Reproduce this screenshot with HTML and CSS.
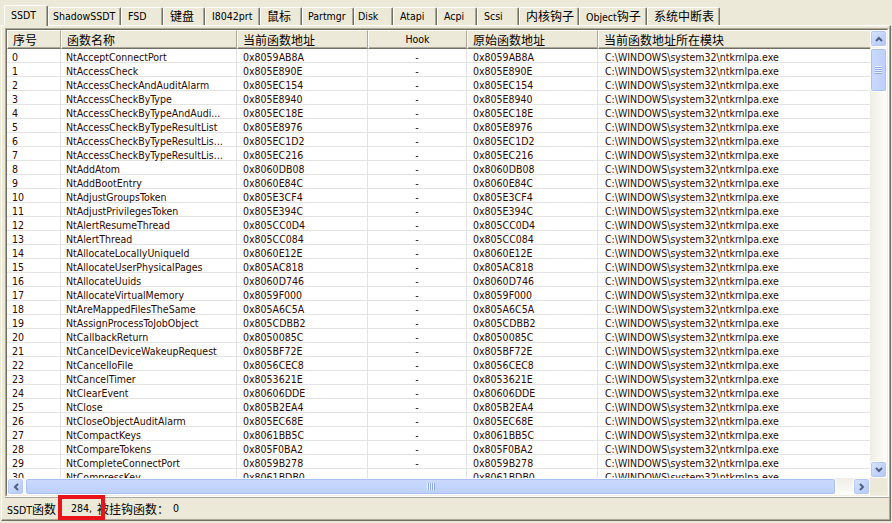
FILE: index.html
```html
<!DOCTYPE html>
<html lang="zh-CN">
<head>
<meta charset="utf-8">
<title>SSDT</title>
<link rel="stylesheet" href="styles.css">
</head>
<body>
<div class="window">
  <div class="tabs">
    <div class="tab active">SSDT</div>
    <div class="tab">ShadowSSDT</div>
    <div class="tab">FSD</div>
    <div class="tab"><span class="zh">键盘</span></div>
    <div class="tab">I8042prt</div>
    <div class="tab"><span class="zh">鼠标</span></div>
    <div class="tab">Partmgr</div>
    <div class="tab">Disk</div>
    <div class="tab">Atapi</div>
    <div class="tab">Acpi</div>
    <div class="tab">Scsi</div>
    <div class="tab"><span class="zh">内核钩子</span></div>
    <div class="tab">Object<span class="zh">钩子</span></div>
    <div class="tab"><span class="zh">系统中断表</span></div>
  </div>
  <div class="panel">
    <div class="list">
      <div class="list-inner">
        <div class="view">
          <div class="hdr">
            <span class="zh">序号</span>
            <span class="zh">函数名称</span>
            <span class="zh">当前函数地址</span>
            <span class="c">Hook</span>
            <span class="zh">原始函数地址</span>
            <span class="zh">当前函数地址所在模块</span>
          </div>
          <div class="rows">
            <div class="row"><span>0</span><span>NtAcceptConnectPort</span><span>0x8059AB8A</span><span class="c">-</span><span>0x8059AB8A</span><span>C:\WINDOWS\system32\ntkrnlpa.exe</span></div>
            <div class="row"><span>1</span><span>NtAccessCheck</span><span>0x805E890E</span><span class="c">-</span><span>0x805E890E</span><span>C:\WINDOWS\system32\ntkrnlpa.exe</span></div>
            <div class="row"><span>2</span><span>NtAccessCheckAndAuditAlarm</span><span>0x805EC154</span><span class="c">-</span><span>0x805EC154</span><span>C:\WINDOWS\system32\ntkrnlpa.exe</span></div>
            <div class="row"><span>3</span><span>NtAccessCheckByType</span><span>0x805E8940</span><span class="c">-</span><span>0x805E8940</span><span>C:\WINDOWS\system32\ntkrnlpa.exe</span></div>
            <div class="row"><span>4</span><span>NtAccessCheckByTypeAndAudi...</span><span>0x805EC18E</span><span class="c">-</span><span>0x805EC18E</span><span>C:\WINDOWS\system32\ntkrnlpa.exe</span></div>
            <div class="row"><span>5</span><span>NtAccessCheckByTypeResultList</span><span>0x805E8976</span><span class="c">-</span><span>0x805E8976</span><span>C:\WINDOWS\system32\ntkrnlpa.exe</span></div>
            <div class="row"><span>6</span><span>NtAccessCheckByTypeResultLis...</span><span>0x805EC1D2</span><span class="c">-</span><span>0x805EC1D2</span><span>C:\WINDOWS\system32\ntkrnlpa.exe</span></div>
            <div class="row"><span>7</span><span>NtAccessCheckByTypeResultLis...</span><span>0x805EC216</span><span class="c">-</span><span>0x805EC216</span><span>C:\WINDOWS\system32\ntkrnlpa.exe</span></div>
            <div class="row"><span>8</span><span>NtAddAtom</span><span>0x8060DB08</span><span class="c">-</span><span>0x8060DB08</span><span>C:\WINDOWS\system32\ntkrnlpa.exe</span></div>
            <div class="row"><span>9</span><span>NtAddBootEntry</span><span>0x8060E84C</span><span class="c">-</span><span>0x8060E84C</span><span>C:\WINDOWS\system32\ntkrnlpa.exe</span></div>
            <div class="row"><span>10</span><span>NtAdjustGroupsToken</span><span>0x805E3CF4</span><span class="c">-</span><span>0x805E3CF4</span><span>C:\WINDOWS\system32\ntkrnlpa.exe</span></div>
            <div class="row"><span>11</span><span>NtAdjustPrivilegesToken</span><span>0x805E394C</span><span class="c">-</span><span>0x805E394C</span><span>C:\WINDOWS\system32\ntkrnlpa.exe</span></div>
            <div class="row"><span>12</span><span>NtAlertResumeThread</span><span>0x805CC0D4</span><span class="c">-</span><span>0x805CC0D4</span><span>C:\WINDOWS\system32\ntkrnlpa.exe</span></div>
            <div class="row"><span>13</span><span>NtAlertThread</span><span>0x805CC084</span><span class="c">-</span><span>0x805CC084</span><span>C:\WINDOWS\system32\ntkrnlpa.exe</span></div>
            <div class="row"><span>14</span><span>NtAllocateLocallyUniqueId</span><span>0x8060E12E</span><span class="c">-</span><span>0x8060E12E</span><span>C:\WINDOWS\system32\ntkrnlpa.exe</span></div>
            <div class="row"><span>15</span><span>NtAllocateUserPhysicalPages</span><span>0x805AC818</span><span class="c">-</span><span>0x805AC818</span><span>C:\WINDOWS\system32\ntkrnlpa.exe</span></div>
            <div class="row"><span>16</span><span>NtAllocateUuids</span><span>0x8060D746</span><span class="c">-</span><span>0x8060D746</span><span>C:\WINDOWS\system32\ntkrnlpa.exe</span></div>
            <div class="row"><span>17</span><span>NtAllocateVirtualMemory</span><span>0x8059F000</span><span class="c">-</span><span>0x8059F000</span><span>C:\WINDOWS\system32\ntkrnlpa.exe</span></div>
            <div class="row"><span>18</span><span>NtAreMappedFilesTheSame</span><span>0x805A6C5A</span><span class="c">-</span><span>0x805A6C5A</span><span>C:\WINDOWS\system32\ntkrnlpa.exe</span></div>
            <div class="row"><span>19</span><span>NtAssignProcessToJobObject</span><span>0x805CDBB2</span><span class="c">-</span><span>0x805CDBB2</span><span>C:\WINDOWS\system32\ntkrnlpa.exe</span></div>
            <div class="row"><span>20</span><span>NtCallbackReturn</span><span>0x8050085C</span><span class="c">-</span><span>0x8050085C</span><span>C:\WINDOWS\system32\ntkrnlpa.exe</span></div>
            <div class="row"><span>21</span><span>NtCancelDeviceWakeupRequest</span><span>0x805BF72E</span><span class="c">-</span><span>0x805BF72E</span><span>C:\WINDOWS\system32\ntkrnlpa.exe</span></div>
            <div class="row"><span>22</span><span>NtCancelIoFile</span><span>0x8056CEC8</span><span class="c">-</span><span>0x8056CEC8</span><span>C:\WINDOWS\system32\ntkrnlpa.exe</span></div>
            <div class="row"><span>23</span><span>NtCancelTimer</span><span>0x8053621E</span><span class="c">-</span><span>0x8053621E</span><span>C:\WINDOWS\system32\ntkrnlpa.exe</span></div>
            <div class="row"><span>24</span><span>NtClearEvent</span><span>0x80606DDE</span><span class="c">-</span><span>0x80606DDE</span><span>C:\WINDOWS\system32\ntkrnlpa.exe</span></div>
            <div class="row"><span>25</span><span>NtClose</span><span>0x805B2EA4</span><span class="c">-</span><span>0x805B2EA4</span><span>C:\WINDOWS\system32\ntkrnlpa.exe</span></div>
            <div class="row"><span>26</span><span>NtCloseObjectAuditAlarm</span><span>0x805EC68E</span><span class="c">-</span><span>0x805EC68E</span><span>C:\WINDOWS\system32\ntkrnlpa.exe</span></div>
            <div class="row"><span>27</span><span>NtCompactKeys</span><span>0x8061BB5C</span><span class="c">-</span><span>0x8061BB5C</span><span>C:\WINDOWS\system32\ntkrnlpa.exe</span></div>
            <div class="row"><span>28</span><span>NtCompareTokens</span><span>0x805F0BA2</span><span class="c">-</span><span>0x805F0BA2</span><span>C:\WINDOWS\system32\ntkrnlpa.exe</span></div>
            <div class="row"><span>29</span><span>NtCompleteConnectPort</span><span>0x8059B278</span><span class="c">-</span><span>0x8059B278</span><span>C:\WINDOWS\system32\ntkrnlpa.exe</span></div>
            <div class="row"><span>30</span><span>NtCompressKey</span><span>0x8061BDB0</span><span class="c">-</span><span>0x8061BDB0</span><span>C:\WINDOWS\system32\ntkrnlpa.exe</span></div>
          </div>
        </div>
        <div class="vscroll">
          <div class="sb"><svg width="8" height="6" viewBox="0 0 8 6"><polyline points="1,5 4,2 7,5" fill="none" stroke="#4D6185" stroke-width="2"/></svg></div>
          <div class="thumb-v"><div class="grip-v"></div></div>
          <div class="track"></div>
          <div class="sb"><svg width="8" height="6" viewBox="0 0 8 6"><polyline points="1,1 4,4 7,1" fill="none" stroke="#4D6185" stroke-width="2"/></svg></div>
        </div>
        <div class="hscroll">
          <div class="sb"><svg width="6" height="8" viewBox="0 0 6 8"><polyline points="5,1 2,4 5,7" fill="none" stroke="#4D6185" stroke-width="2"/></svg></div>
          <div class="thumb-h"><div class="grip-h"></div></div>
          <div class="track"></div>
          <div class="sb"><svg width="6" height="8" viewBox="0 0 6 8"><polyline points="1,1 4,4 1,7" fill="none" stroke="#4D6185" stroke-width="2"/></svg></div>
        </div>
        <div class="corner"></div>
      </div>
    </div>
    <div class="status">
      <span class="s1">SSDT<span class="zh">函数</span></span>
      <span class="s2">284,</span>
      <span class="s3"><span class="zh">被挂钩函数：</span></span>
      <span class="s4">0</span>
    </div>
  </div>
  <div class="mark"></div>
</div>
</body>
</html>
```
FILE: styles.css
```css
* { box-sizing: border-box; }
html, body { margin: 0; padding: 0; }
body {
  background: #ECE9D8;
  width: 892px;
  height: 523px;
  overflow: hidden;
  font-family: "DejaVu Sans Condensed", "DejaVu Sans", "Noto Sans CJK SC", sans-serif;
  font-stretch: condensed;
  font-size: 10.5px;
  color: #000;
}
.zh {
  font-family: "Noto Sans CJK SC", sans-serif;
  font-stretch: normal;
  font-size: 12px;
}
.window { position: relative; width: 892px; height: 523px; }

/* tabs */
.tabs {
  position: relative;
  z-index: 1;
  display: flex;
  align-items: flex-end;
  height: 25px;
  padding-left: 4px;
}
.tab {
  height: 18px;
  padding-left: 6px;
  line-height: 16px;
  white-space: nowrap;
  overflow: hidden;
  border-top: 1px solid #fff;
  border-left: 1px solid #fff;
  border-right: 1px solid #716F64;
  border-radius: 2px 2px 0 0;
  box-shadow: inset -1px 0 0 #ACA899;
  background: #ECE9D8;
}
.tab.active { height: 21px; margin-bottom: -1px; line-height: 18px; }
.tab:nth-child(1) { width: 44px; }
.tab:nth-child(2) { width: 73px; padding-left: 4px; }
.tab:nth-child(3) { width: 42px; }
.tab:nth-child(4) { width: 42px; }
.tab:nth-child(5) { width: 55px; }
.tab:nth-child(6) { width: 42px; }
.tab:nth-child(7) { width: 52px; padding-left: 5px; }
.tab:nth-child(8) { width: 39px; padding-left: 3px; }
.tab:nth-child(9) { width: 44px; }
.tab:nth-child(10) { width: 40px; }
.tab:nth-child(11) { width: 42px; }
.tab:nth-child(12) { width: 60px; }
.tab:nth-child(13) { width: 68px; }
.tab:nth-child(14) { width: 73px; }

/* panel */
.panel {
  margin-left: 1px;
  width: 890px;
  height: 496px;
  border-top: 1px solid #fff;
  border-left: 1px solid #fff;
  border-right: 1px solid #716F64;
  border-bottom: 1px solid #716F64;
  box-shadow: inset -1px -1px 0 #ACA899;
  padding: 2px 1px 0 3px;
}
.list {
  width: 884px;
  height: 469px;
  border: 1px solid;
  border-color: #ACA899 #fff #fff #ACA899;
}
.list-inner {
  height: 100%;
  border: 1px solid;
  border-color: #716F64 #F1EFE2 #F1EFE2 #716F64;
  display: grid;
  grid-template-columns: 863px 17px;
  grid-template-rows: 448px 17px;
  background: #fff;
}
.view {
  grid-column: 1;
  grid-row: 1;
  overflow: hidden;
  display: flex;
  flex-direction: column;
  background: #fff;
}
.hdr, .row {
  display: grid;
  grid-template-columns: 54px 176px 131px 99px 131px 272px;
}
.hdr > span {
  height: 19px;
  line-height: 17px;
  padding-left: 5px;
  white-space: nowrap;
  overflow: hidden;
  background: #ECE9D8;
  border-top: 1px solid #fff;
  border-left: 1px solid #fff;
  border-right: 1px solid #ACA899;
  border-bottom: 1px solid #716F64;
  box-shadow: inset 0 -1px 0 #ACA899;
}
.hdr > span:last-child { border-right: none; }
.hdr > .c { text-align: center; padding-left: 0; font-size: 10.5px; }
.rows { flex: 1; overflow: hidden; }
.row { height: 14px; color: #2a0800; }
.row > span {
  height: 14px;
  line-height: 13px;
  padding-top: 2px;
  padding-left: 5px;
  white-space: nowrap;
  overflow-x: clip;
  overflow-y: visible;
  border-right: 1px solid #E3E3E3;
  border-bottom: 1px solid #E3E3E3;
}
.row > span:nth-child(3), .row > span:nth-child(5) { padding-left: 6px; }
.row > span:last-child { border-right: none; padding-left: 7px; }
.row > .c { text-align: center; padding-left: 0; }

/* scrollbars */
.vscroll {
  grid-column: 2;
  grid-row: 1;
  position: relative;
  z-index: 1;
  display: flex;
  flex-direction: column;
  background: linear-gradient(to right, #EEEDE5, #FDFDFA);
}
.hscroll {
  grid-column: 1;
  grid-row: 2;
  position: relative;
  z-index: 1;
  display: flex;
  background: linear-gradient(to bottom, #EEEDE5, #FDFDFA);
}
.corner { grid-column: 2; grid-row: 2; background: #ECE9D8; }
.track { flex: 1; }
.sb {
  flex: none;
  width: 17px;
  height: 17px;
  display: flex;
  align-items: center;
  justify-content: center;
  border: 1px solid #fff;
  border-radius: 3px;
  background: linear-gradient(135deg, #D9E4FE 0%, #C4D5FC 50%, #B5C9F7 100%);
  box-shadow: inset 0 0 0 1px #B4C8F2;
}
.thumb-v {
  flex: none;
  height: 44px;
  margin-top: 1px;
  display: flex;
  align-items: center;
  justify-content: center;
  border: 1px solid #fff;
  border-radius: 3px;
  background: linear-gradient(to right, #CBDAFD, #BDD0FA);
  box-shadow: inset 0 0 0 1px #A9C0F3;
}
.grip-v {
  width: 7px;
  height: 8px;
  background: repeating-linear-gradient(to bottom, #EEF3FE 0 1px, #8DA9E8 1px 2px);
}
.thumb-h {
  flex: none;
  width: 811px;
  margin-left: 1px;
  display: flex;
  align-items: center;
  justify-content: center;
  border: 1px solid #fff;
  border-radius: 3px;
  background: linear-gradient(to bottom, #CBDAFD, #BDD0FA);
  box-shadow: inset 0 0 0 1px #A9C0F3;
}
.grip-h {
  width: 8px;
  height: 7px;
  background: repeating-linear-gradient(to right, #EEF3FE 0 1px, #8DA9E8 1px 2px);
}

/* status */
.status {
  height: 21px;
  display: flex;
  align-items: center;
  padding-left: 2px;
  border-top: 1px solid #ACA899;
  white-space: nowrap;
}
.s1 { width: 64px; }
.s2 { width: 26px; }
.s3 { width: 76px; }
.mark {
  position: absolute;
  left: 58px;
  top: 495px;
  width: 47px;
  height: 25px;
  border: 4px solid #E8141A;
}
```
